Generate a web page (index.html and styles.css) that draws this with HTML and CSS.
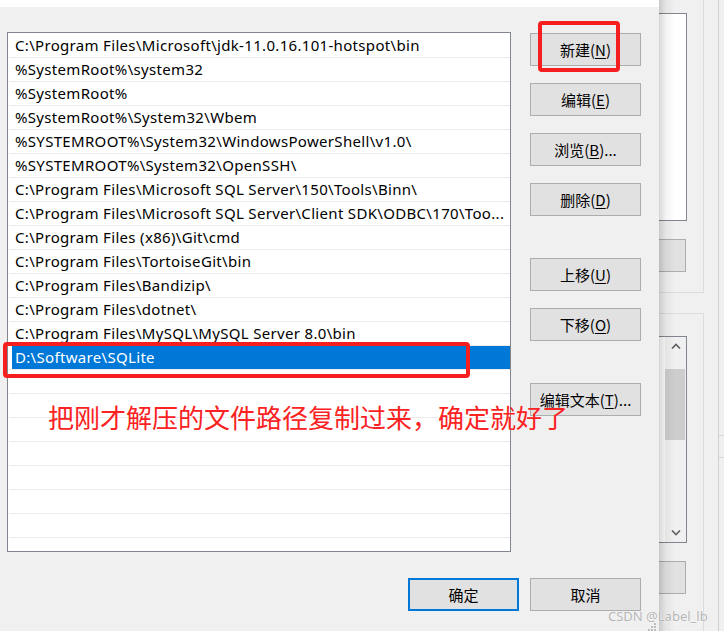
FILE: index.html
```html
<!DOCTYPE html>
<html lang="zh-CN">
<head>
<meta charset="utf-8">
<title>编辑环境变量</title>
<link rel="stylesheet" href="styles.css">
</head>
<body>
<div class="screen">
  <div class="dialog">
    <div class="title-edge"></div>
    <div class="content">
      <div class="list">
        <div class="row">C:\Program Files\Microsoft\jdk-11.0.16.101-hotspot\bin</div>
        <div class="row">%SystemRoot%\system32</div>
        <div class="row">%SystemRoot%</div>
        <div class="row">%SystemRoot%\System32\Wbem</div>
        <div class="row">%SYSTEMROOT%\System32\WindowsPowerShell\v1.0\</div>
        <div class="row">%SYSTEMROOT%\System32\OpenSSH\</div>
        <div class="row">C:\Program Files\Microsoft SQL Server\150\Tools\Binn\</div>
        <div class="row">C:\Program Files\Microsoft SQL Server\Client SDK\ODBC\170\Too...</div>
        <div class="row">C:\Program Files (x86)\Git\cmd</div>
        <div class="row">C:\Program Files\TortoiseGit\bin</div>
        <div class="row">C:\Program Files\Bandizip\</div>
        <div class="row">C:\Program Files\dotnet\</div>
        <div class="row">C:\Program Files\MySQL\MySQL Server 8.0\bin</div>
        <div class="row sel"><span>D:\Software\SQLite</span></div>
        <div class="row"></div>
        <div class="row"></div>
        <div class="row"></div>
        <div class="row"></div>
        <div class="row"></div>
        <div class="row"></div>
        <div class="row"></div>
        <div class="row"></div>
      </div>
      <div class="side">
        <button class="btn">新建(<u>N</u>)</button>
        <button class="btn">编辑(<u>E</u>)</button>
        <button class="btn">浏览(<u>B</u>)...</button>
        <button class="btn">删除(<u>D</u>)</button>
        <button class="btn spaced">上移(<u>U</u>)</button>
        <button class="btn">下移(<u>O</u>)</button>
        <button class="btn spaced">编辑文本(<u>T</u>)...</button>
      </div>
    </div>
    <div class="footer">
      <button class="btn default">确定</button>
      <button class="btn">取消</button>
    </div>
  </div>

  <div class="behind">
    <div class="bw-group g1"></div>
    <div class="bw-list l1"></div>
    <div class="bw-btn b1"></div>
    <div class="bw-group g2"></div>
    <div class="bw-list l2">
      <div class="sb">
        <svg class="arrow" width="10" height="6" viewBox="0 0 10 6"><path d="M1 5.5 L5 1.5 L9 5.5" fill="none" stroke="#606060" stroke-width="1.6"/></svg>
        <div class="track"><div class="thumb"></div></div>
        <svg class="arrow" width="10" height="6" viewBox="0 0 10 6"><path d="M1 0.5 L5 4.5 L9 0.5" fill="none" stroke="#606060" stroke-width="1.6"/></svg>
      </div>
    </div>
    <div class="bw-btn b2"></div>
    <div class="bw-edge"></div>
    <div class="bw-tick t1"></div>
    <div class="bw-tick t2"></div>
    <div class="shade"></div>
  </div>

  <div class="mark mark-new"></div>
  <div class="mark mark-row"></div>
  <div class="note">把刚才解压的文件路径复制过来，确定就好了</div>
  <div class="watermark">CSDN @Label_lb</div>
  <svg class="grip" width="12" height="8" viewBox="0 0 12 8">
    <rect x="9" y="0" width="2" height="2" fill="#bdbdbd"/>
    <rect x="6" y="3" width="2" height="2" fill="#bdbdbd"/>
    <rect x="9" y="3" width="2" height="2" fill="#bdbdbd"/>
    <rect x="3" y="6" width="2" height="2" fill="#bdbdbd"/>
    <rect x="6" y="6" width="2" height="2" fill="#bdbdbd"/>
    <rect x="9" y="6" width="2" height="2" fill="#bdbdbd"/>
  </svg>
</div>
</body>
</html>
```

FILE: styles.css
```css
* { box-sizing: border-box; }
html, body { margin: 0; padding: 0; }
body {
  width: 724px;
  height: 631px;
  overflow: hidden;
  background: #f0f0f0;
  font-family: "Noto Sans", "Noto Sans CJK SC", sans-serif;
}
.screen {
  position: relative;
  display: flex;
  width: 724px;
  height: 631px;
}
.dialog {
  position: relative;
  z-index: 2;
  width: 659px;
  flex: none;
  background: #f0f0f0;
  display: flex;
  flex-direction: column;
}
.title-edge { height: 7px; background: #fff; }
.content {
  display: flex;
  align-items: flex-start;
  padding: 25px 0 0 7px;
}
.list {
  width: 504px;
  height: 520px;
  border: 1px solid #82878f;
  background: #fff;
  padding-top: 1px;
  overflow: hidden;
  flex: none;
}
.row {
  height: 24px;
  border-bottom: 1px solid #ebebeb;
  margin-left: 1px;
  padding-left: 6px;
  font-size: 15px;
  letter-spacing: 0.32px;
  line-height: 23px;
  color: #000;
  white-space: nowrap;
  overflow: hidden;
}
.row.sel { padding-left: 3px; }
.row.sel span {
  display: block;
  height: 23px;
  padding-left: 3px;
  background: #0078d7;
  color: #fff;
}
.side {
  display: flex;
  flex-direction: column;
  gap: 17px;
  margin: 1px 0 0 19px;
}
.btn {
  width: 111px;
  height: 33px;
  padding: 0;
  background: #e1e1e1;
  border: 1px solid #adadad;
  border-radius: 0;
  font-family: "Noto Sans CJK SC", sans-serif;
  font-size: 15px;
  line-height: 30px;
  color: #000;
}
.btn u { text-underline-offset: 2px; }
.btn.spaced { margin-top: 25px; }
.btn.default { border: 2px solid #0078d7; line-height: 28px; }
.footer {
  display: flex;
  justify-content: flex-end;
  gap: 11px;
  padding: 26px 18px 0 0;
}

/* window behind the dialog */
.behind {
  position: relative;
  flex: 1;
  background: #f0f0f0;
  overflow: hidden;
}
.bw-group {
  position: absolute;
  left: -20px;
  width: 65px;
  border: 1px solid #dcdcdc;
}
.g1 { top: -20px; height: 313px; }
.g2 { top: 313px; height: 400px; }
.bw-list {
  position: absolute;
  left: -20px;
  width: 48px;
  background: #fff;
  border: 1px solid #82878f;
}
.l1 { top: 13px; height: 208px; }
.l2 { top: 336px; height: 207px; display: flex; justify-content: flex-end; }
.sb {
  width: 21px;
  height: 100%;
  background: #f0f0f0;
  display: flex;
  flex-direction: column;
  align-items: center;
  padding: 6px 0 6px 0;
}
.arrow { flex: none; }
.track { flex: 1; width: 100%; padding: 20px 1px 0 0; }
.thumb { height: 71px; background: #cdcdcd; }
.bw-btn {
  position: absolute;
  left: -20px;
  width: 47px;
  height: 33px;
  background: #e1e1e1;
  border: 1px solid #adadad;
}
.b1 { top: 239px; }
.b2 { top: 561px; }
.bw-edge {
  position: absolute;
  left: 59px;
  top: 0;
  width: 1px;
  height: 631px;
  background: #d0d0d0;
}
.bw-tick {
  position: absolute;
  left: 60px;
  width: 6px;
  height: 1px;
  background: #d6d6d6;
}
.t1 { top: 435px; }
.t2 { top: 457px; }
.shade {
  position: absolute;
  left: 0;
  top: 0;
  width: 16px;
  height: 631px;
  background: linear-gradient(to right, rgba(0,0,0,0.16), rgba(0,0,0,0.05) 40%, rgba(0,0,0,0));
}

/* annotations */
.mark {
  position: absolute;
  z-index: 5;
  border: 4px solid #f61e1e;
  border-radius: 4px;
}
.mark-new { left: 538px; top: 21px; width: 82px; height: 51px; }
.mark-row { left: 3px; top: 342px; width: 467px; height: 36px; }
.note {
  position: absolute;
  z-index: 5;
  left: 48px;
  top: 404px;
  font-family: "Noto Sans CJK SC", sans-serif;
  font-size: 26px;
  line-height: 26px;
  color: #fa2222;
  white-space: nowrap;
}
.watermark {
  position: absolute;
  z-index: 6;
  left: 608px;
  top: 606px;
  font-family: "Noto Sans", sans-serif;
  font-size: 13px;
  line-height: 20px;
  color: #b4b4b4;
  text-shadow: 0 0 1px #fff, 0 0 1px #fff;
  white-space: nowrap;
}
.grip {
  position: absolute;
  z-index: 6;
  left: 645px;
  top: 623px;
}
```
